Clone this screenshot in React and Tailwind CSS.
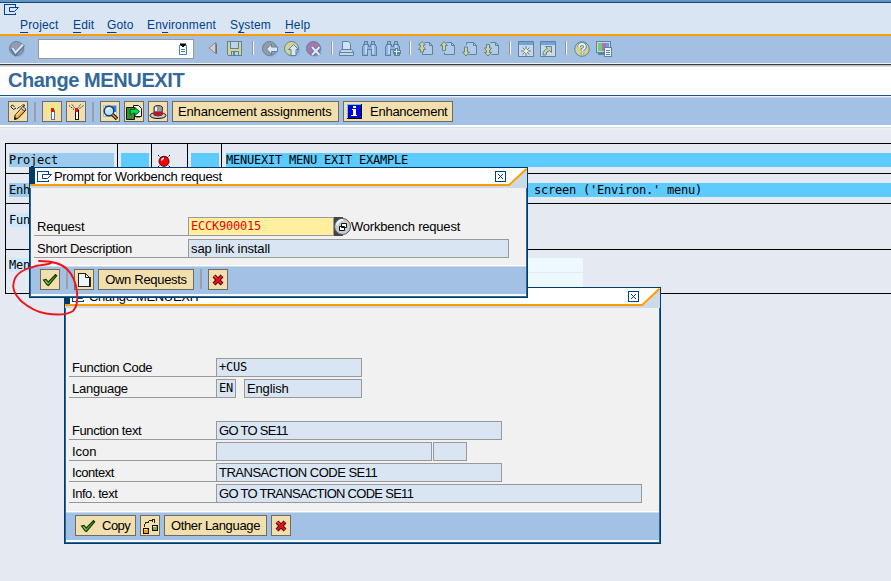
import React from "react";

const SANS = "font-['Liberation_Sans',sans-serif]";
const MONO = "font-['DejaVu_Sans_Mono',monospace] !text-[12px] !tracking-[-0.22px]";

function Svg({ w = 16, h = 16, vb, children, className = "" }) {
  return (
    <svg width={w} height={h} viewBox={vb || `0 0 ${w} ${h}`} fill="none" className={`block shrink-0 ${className}`}>
      {children}
    </svg>
  );
}

const LINE = "#5f8399";
const YEL = "#d5d391";

/* ---------- window and toolbar icons ---------- */

function MenuIcon() {
  return (
    <Svg w={16} h={12}>
      <path d="M11.5 3V.5H.5v10h11V8.5" stroke="#00408c" shapeRendering="crispEdges" />
      <path d="M5.5 3.5h9l-4 4h-5z" stroke="#00408c" />
    </Svg>
  );
}

function Ball({ color, children }) {
  return (
    <Svg>
      <circle cx="9" cy="9" r="7" fill="#91b2e0" />
      <circle cx="7.5" cy="7.5" r="7" fill={color} stroke={LINE} />
      {children}
    </Svg>
  );
}

const Enter = () => (
  <Ball color="#969caa">
    <path d="M3 7.5l3.5 5 8-9" stroke="#587795" strokeWidth="4" />
    <path d="M3.5 7l3 4.5 7.5-8" stroke="#d8e4f4" strokeWidth="2.2" />
  </Ball>
);
const Back = () => (
  <Ball color="#999ba4">
    <path d="M4.5 8L9.5 3V6h6v4.500h-6v3z" fill="#d8e6f8" stroke={LINE} />
  </Ball>
);
const Exit = () => (
  <Ball color={YEL}>
    <path d="M9.500 3.500l5 5h-2.500v6h-5v-6H4.500z" fill="#d8e6f8" stroke={LINE} />
  </Ball>
);
const Cancel = () => (
  <Ball color="#a778ad">
    <path d="M6 6l7.500 8M13.500 6L6 14" stroke="#6a7398" strokeWidth="3.500" />
    <path d="M6 6l7.500 8M13.500 6L6 14" stroke="#e0eafb" strokeWidth="2" />
  </Ball>
);
const Triangle = () => (
  <Svg w={10} h={14}>
    <path d="M9 1v12L6 11z" fill="#716b70" />
    <path d="M7.500 1.500v11L1 7z" fill="#d5d0cf" stroke="#8f8987" />
  </Svg>
);
const Save = () => (
  <Svg>
    <g shapeRendering="crispEdges">
      <path d="M.5 .5h14v14H1.500L.5 13.500z" fill={YEL} stroke={LINE} />
      <path d="M3.500 .5h8v7h-8zM4.500 10.500h7v4h-7z" fill="#bdd2ee" stroke={LINE} />
      <path d="M6 11h2v3H6z" fill={LINE} />
    </g>
  </Svg>
);
const Print = () => (
  <Svg>
    <path d="M3.500 8.500v-8h6l2 2v6" fill="#d0e0f7" stroke={LINE} />
    <path d="M.5 11l2-2.500h10l2 2.500v3.500H.5z" fill="#c6d5eb" stroke={LINE} />
    <path d="M1 11.500h13" stroke={LINE} />
  </Svg>
);
const Glasses = ({ plus }) => (
  <Svg>
    <g shapeRendering="crispEdges">
      <path d="M2.500 .5h3v3h1v2h2v-2h1v-3h3v3h1l1 3v8h-5v-6h-4v6h-5v-8l1-3h1z" fill="#8db0ea" stroke={LINE} />
      <path d="M3 4h2v9H3zM10 4h2v9h-2z" fill="#bcd4f8" />
      <path d="M2 3.500h4M9 3.500h4" stroke={LINE} />
      {plus && (
        <>
          <path d="M10 7h3v2h3v3.500h-3V15h-3v-2.500H7.500V9H10z" fill={LINE} />
          <path d="M11.500 8v6M8.500 10.500h6.500" stroke="#e1eafb" strokeWidth="1.500" />
        </>
      )}
    </g>
  </Svg>
);
const Page = ({ kind }) => (
  <Svg>
    <path
      d={kind === "down" ? "M4.500 4V1.500h7l3 3v9h-8" : kind === "last" ? "M6.500 1.500h5l3 3v9h-7" : "M6.500 1.500h5l3 3v9h-10v-2"}
      fill="#b3cbea"
      stroke={LINE}
    />
    <path d="M11.500 1.500v3h3" stroke={LINE} />
    {kind === "first" && <path d="M4 .5L7.500 4H5.500v1.500L7.500 8.500H5.500v2.500h-3V8.500H.5l2-3V4H.5z" fill={YEL} stroke={LINE} />}
    {kind === "up" && <path d="M4 .5l3.500 4h-2v5h-3v-5h-2z" fill={YEL} stroke={LINE} />}
    {kind === "down" && <path d="M4 15l-3.500-4h2V6h3v5h2z" fill={YEL} stroke={LINE} />}
    {kind === "last" && <path d="M4 15L.5 11.500h2V10L.5 7h2V3.500h3V7h2l-2 3v1.500h2z" fill={YEL} stroke={LINE} />}
  </Svg>
);
const Session = () => (
  <Svg>
    <path d="M.5 .5h15v15H.5z" fill="#c9d8eb" stroke={LINE} />
    <path d="M1 1h14v3H1z" fill="#70a2dc" />
    <path d="M8 5v10M3 10h10M4.500 6.500l7 7M11.500 6.500l-7 7" stroke={LINE} />
    <path d="M8 8v4M6 10h4" stroke="#eeeeb0" strokeWidth="2" />
  </Svg>
);
const Shortcut = () => (
  <Svg>
    <path d="M.5 .5h15v15H.5z" fill="#c9d8eb" stroke={LINE} />
    <path d="M1 1h14v3H1z" fill="#70a2dc" />
    <path d="M5.500 5.500h6v6L9.500 9.500Q6 10 6 14H3Q3 9 7.500 7.500z" fill={YEL} stroke={LINE} />
  </Svg>
);
const Help = () => (
  <Svg>
    <circle cx="8" cy="8" r="7.300" fill={YEL} stroke={LINE} />
    <path d="M5 6q0-3 3-3t3 3q0 1.500-2.500 2.500v1.500M8.500 11.500v2" stroke={LINE} strokeWidth="3.500" />
    <path d="M5 6q0-3 3-3t3 3q0 1.500-2.500 2.500v1.500M8.500 11.500v2" stroke="#eaf0f3" strokeWidth="1.800" />
  </Svg>
);
const Layout = () => (
  <Svg>
    <g shapeRendering="crispEdges">
      <path d="M.5 .5h14v11H.5z" fill="#c6d5e8" stroke={LINE} />
      <path d="M2 2h4v8H2z" fill="#74ce6d" />
      <path d="M6 2h4v8H6z" fill="#b06fc0" />
      <path d="M10 2h3v8h-3z" fill="#739ed9" />
      <path d="M2 12h8v2H2z" fill={LINE} />
      <path d="M8.500 6.500h7v9h-7z" fill="#e8f0fa" stroke={LINE} />
      <path d="M10 9.500h4M10 11.500h4M10 13.500h4" stroke={LINE} />
    </g>
  </Svg>
);

/* ---------- application toolbar icons ---------- */

const Pencil = () => (
  <Svg w={18} h={18}>
    <path d="M1.500 3.500l2-1.500 2 2M2 4l2.500 2.500L7 5M8 5.500l5-3.500h2.500l-1 2" stroke="#111" />
    <path d="M8 4.500l5-3 .5 1" stroke="#fff" />
    <path d="M5.500 16.500l.5-4 7-8 3.500 3-7.500 8z" fill="#f7a43a" stroke="#111" />
    <path d="M7.500 12.500l6-7" stroke="#ffe59b" strokeWidth="1.500" />
    <path d="M12 5.500l1.500-2L17 6l-1.500 2z" fill="#c9d4e0" stroke="#111" strokeWidth=".7" />
    <path d="M5.500 16.500l.3-2.500 2.200 1.800z" fill="#111" />
  </Svg>
);
const Wand = ({ off }) => (
  <Svg w={18} h={18}>
    {off ? (
      <path d="M2 2.500l5 4M5 1.500l3 4M13.500 1.500l-3 4M16.500 2.500l-5 4" stroke="#333" strokeDasharray="1.500 1" />
    ) : (
      <path d="M4 2.500l3 3M15 2.500l-3 3M9.500 .5v4M2.500 8h4M12.500 8h4M4 13l3-3M15 13l-3-3" stroke="#ffff00" />
    )}
    <g shapeRendering="crispEdges">
      {!off && <path d="M7 4h5v7H7z" fill="#ffff60" opacity=".6" />}
      <path d="M8 7h4v10H8z" fill={off ? "#111" : "#5a6ac0"} />
      <path d="M8 5h3v4H8z" fill="#dc1420" />
      <path d="M9 9h2v7H9z" fill="#fff" />
    </g>
  </Svg>
);
const Lens = () => (
  <Svg w={18} h={18}>
    <g shapeRendering="crispEdges">
      <path d="M2 2h13v11H2z" fill="#eef4f8" stroke="#a9bccb" />
      <path d="M4 3h11v6H4z" fill="#2b7fdc" />
    </g>
    <circle cx="8" cy="8" r="4.800" fill="#b9e5fa" stroke="#223a66" strokeWidth="1.500" />
    <path d="M5.500 7q1-2 3.500-2" stroke="#fff" strokeWidth="1.500" />
    <path d="M11.500 11.500l4.500 4.500" stroke="#111" strokeWidth="3.500" />
    <path d="M11.500 11.500l4 4" stroke="#f79a32" strokeWidth="1.500" />
  </Svg>
);
const Transfer = () => (
  <Svg w={18} h={18}>
    <path d="M8.500 2.500h5l3 3v8h-8z" fill="#fff" stroke="#111" />
    <path d="M1.500 4.500h8v12h-8z" fill="#3a8d2c" stroke="#111" />
    <path d="M5 6.500h5v-2l4.500 4-4.500 4v-2.500q-3 0-4.500 2z" fill="#00e03a" stroke="#006020" />
    <path d="M11 14.500h4" stroke="#888" />
  </Svg>
);
const Hat = () => (
  <Svg w={18} h={18}>
    <ellipse cx="9" cy="12.500" rx="8" ry="3" fill="#c5c9d2" stroke="#111" />
    <path d="M5 12V4q1-1.500 4-1.500t4.500 1.500L13 12q-4 2-8 0z" fill="#969aa5" stroke="#333" />
    <path d="M5 8.500h8.500V12q-4 2-8.500 0z" fill="#b91824" />
    <path d="M7 4v4" stroke="#edf0f5" strokeWidth="2" />
  </Svg>
);
const Info = () => (
  <Svg w={15} h={15}>
    <g shapeRendering="crispEdges">
      <path d="M0 0h15v15H0z" fill="#000" />
      <path d="M0 0h14v14H0z" fill="#5fc8f0" />
      <path d="M1 1h13v13H1z" fill="#0000d8" />
      <path d="M6 2h3v2H6zM5 5h4v6h1v1H4v-1h2V6H5z" fill="#fff" />
    </g>
  </Svg>
);
const Check = () => (
  <Svg w={16} h={16}>
    <path d="M1.500 8l2.500-.7 2.300 2.700L13.500 2.500l1.200 1.200L6.500 13.500 5.300 13z" fill="#4eac21" stroke="#16330b" strokeWidth="1.100" />
    <path d="M3.500 9l2.300 2.500" stroke="#a4da60" />
  </Svg>
);
const Cross = () => (
  <Svg w={12} h={12}>
    <path d="M2 2l8 8M10 2l-8 8" stroke="#420608" strokeWidth="4" />
    <path d="M2 2l8 8M10 2l-8 8" stroke="#e3131e" strokeWidth="2.400" />
    <path d="M2 1.500l2.500 2.500" stroke="#ff8080" strokeWidth=".8" />
  </Svg>
);
const NewPage = () => (
  <Svg w={14} h={16}>
    <g shapeRendering="crispEdges">
      <path d="M1.500 1.500h8v3h3v10h-11z" fill="#ecf8ff" />
      <path d="M9 1.500H1.500v13" stroke="#222" />
      <path d="M1 14.500h12V5" stroke="#222" strokeWidth="1.500" />
    </g>
    <path d="M8.500 1.500v4h4z" fill="#fff" stroke="#222" />
  </Svg>
);
const Link = () => (
  <Svg w={16} h={16}>
    <g shapeRendering="crispEdges">
      <path d="M2.500 9V6.500h1v-2h3M5 4.500h1v-2h3v-1h4M10.500 .5v3M12.500 2v4" stroke="#222" strokeDasharray="3 1" />
      <path d="M1.500 10.500h5v5h-5z" fill="#ff9a10" stroke="#111" />
      <path d="M10.500 7.500h5v5h-5z" fill="#78b13c" stroke="#111" />
      <path d="M2 11.500h3M11 8.500h3" stroke="#ffe4a0" />
    </g>
  </Svg>
);
const Led = () => (
  <Svg w={14} h={14}>
    <path d="M1 1l12 12M13 1L1 13" stroke="#111" strokeDasharray="2 1" />
    <circle cx="7" cy="7.300" r="5" fill="#f00505" stroke="#5e0000" />
    <path d="M4.500 6.500q.5-2 2.500-2.200" stroke="#fff" strokeWidth="1.500" />
  </Svg>
);

/* ---------- shared controls ---------- */

const Sep = () => (
  <div className="flex h-[14px] w-[2px] shrink-0">
    <div className="w-px bg-[#8e99a8]" />
    <div className="w-px bg-[#f8f3e9]" />
  </div>
);
const Bar = ({ className = "" }) => <div className={`h-[20px] w-[2px] shrink-0 bg-[#9a9fa8] ${className}`} />;

function Btn({ className = "w-[20px] justify-center", children }) {
  return (
    <button className={`flex h-[21px] shrink-0 items-center whitespace-nowrap border border-[#6e6c62] bg-[#f2dfae] text-[13px] leading-none text-black ${className}`}>
      {children}
    </button>
  );
}

function Field({ className = "", children }) {
  return (
    <div className={`flex h-[19px] shrink-0 items-center overflow-hidden whitespace-pre border border-[#999] bg-[#d9e5f3] pl-[2px] text-[13px] leading-[17px] text-black ${className}`}>
      {children}
    </div>
  );
}

function Label({ className, children }) {
  return (
    <div className={`flex h-[19px] shrink-0 items-center whitespace-nowrap border-b border-[#999] pl-[3px] pt-px text-[13px] leading-[17px] ${className}`}>
      {children}
    </div>
  );
}

function Dialog({ className, title, children, footer, inner }) {
  return (
    <section className={`absolute flex flex-col border border-[#003c6b] bg-[#f1f1f1] ${className}`}>
      <div className="flex h-[16px] shrink-0 bg-white">
        <div className="w-[5px] bg-[#003c6b]" />
        <div className="flex flex-1 items-center overflow-hidden whitespace-nowrap pl-[2px] pt-px text-[13px]">
          <MenuIcon />
          <span className="pl-[1px] leading-4 tracking-[-0.32px]">{title}</span>
        </div>
        <Svg w={33} h={18} className="relative z-10">
          <path d="M33 1v17H16z" fill="#cbdae8" />
          <path d="M1.500 3.500h10v10h-10z" stroke="#00407f" shapeRendering="crispEdges" />
          <path d="M4 6l5 5M9 6l-5 5" stroke="#00407f" />
          <path d="M15 17.300L32.500 .8" stroke="#ff9c00" strokeWidth="2" />
        </Svg>
      </div>
      <div className="flex h-[4px] shrink-0 flex-col">
        <div className="mr-[17px] h-[2px] bg-[#ff9c00]" />
        <div className="h-[2px] bg-[#cbdae8]" />
      </div>
      <div className="flex flex-1 flex-col border-x border-[#2d6898]">
        <div className={`flex-1 ${inner}`}>{children}</div>
        <div className="h-px bg-white" />
        <div className="h-px bg-[#cbdbed]" />
        <div className="flex h-[27px] items-start bg-[#a3c0e5] pt-[2px]">{footer}</div>
        <div className="h-[2px] bg-[#f5f8fc]" />
      </div>
      <div className="h-px bg-[#2d6898]" />
    </section>
  );
}

const MENU = [
  ["Project", "w-[53px]"],
  ["Edit", "w-[34px]"],
  ["Goto", "w-[40px]"],
  ["En|v|ironment", "w-[83px]"],
  ["S|y|stem", "w-[55px]"],
  ["Help", "w-[40px]"],
];

function MenuItem({ label, width }) {
  const parts = label.includes("|") ? label.split("|") : ["", label[0], label.slice(1)];
  return (
    <span className={`${width} whitespace-nowrap`}>
      {parts[0]}
      <span className="underline decoration-1 underline-offset-[3px] [text-decoration-skip-ink:none]">{parts[1]}</span>
      {parts[2]}
    </span>
  );
}

function Cell({ className, children }) {
  return <div className={`h-[14px] whitespace-pre leading-[14px] ${className}`}>{children}</div>;
}

export default function App() {
  return (
    <div className={`relative h-[581px] w-[891px] overflow-hidden bg-[#e5e9f1] text-black ${SANS}`}>
      <header>
        <div className="h-[3px] border-b border-[#1e4268] bg-[#5c95c8]" />
        <div className="h-[31px] bg-[#d9e5f3]">
          <div className="h-[15px] pl-1 pt-px"><MenuIcon /></div>
          <nav className="flex pl-[20px] text-[12px] leading-[15px] tracking-[0.15px] text-[#003f8a]">
            {MENU.map(([l, w]) => <MenuItem key={l} label={l} width={w} />)}
          </nav>
        </div>
        <div className="h-[2px] bg-[#ff9c00]" />
        <div className="flex h-[27px] items-start bg-[#a3c0e3] pl-[9px] pt-[5px]">
          <Enter />
          <div className="-mt-[2px] ml-[13px] mr-[14px] flex h-[20px] w-[156px] items-center justify-end border border-[#999] bg-white pr-[5px]">
            <Svg w={10} h={13}>
              <path d="M1.500 2.500h7v9h-7z" fill="#fff" stroke="#4d7fa0" />
              <path d="M3 6.500h4M3 8.500h4" stroke="#4d7fa0" />
              <path d="M2 1h6L5 4z" fill="#000" stroke="#000" />
            </Svg>
          </div>
          <Triangle />
          <div className="ml-[9px] mr-[9px]"><Save /></div>
          <Sep />
          <div className="ml-2 mr-[9px] flex gap-[6px]"><Back /><Exit /><Cancel /></div>
          <Sep />
          <div className="ml-[6px] mr-[8px] flex gap-[7px]"><Print /><Glasses /><Glasses plus /></div>
          <Sep />
          <div className="ml-[7px] mr-[9px] flex gap-[6px]">
            <Page kind="first" /><Page kind="up" /><Page kind="down" /><Page kind="last" />
          </div>
          <Sep />
          <div className="ml-[7px] mr-[9px] flex gap-[6px]"><Session /><Shortcut /></div>
          <Sep />
          <div className="ml-[7px] flex gap-[6px]"><Help /><Layout /></div>
        </div>
        <div className="h-px bg-[#eef4fb]" />
        <div className="h-px bg-[#3b3b3f]" />
        <div className="h-px bg-[#bcbcc0]" />
        <div className="h-px bg-[#dedede]" />
        <div className="h-[28px] bg-white pl-2 text-[20px] font-bold leading-[27px] tracking-[-0.4px] text-[#336899]">Change MENUEXIT</div>
        <div className="h-px bg-[#23507f]" />
        <div className="h-px bg-[#eaf1f9]" />
        <div className="h-px bg-[#bed3eb]" />
        <div className="flex h-[27px] items-center bg-[#a3c0e5] pl-2">
          <Btn><Pencil /></Btn>
          <Bar className="mx-[6px]" />
          <div className="flex gap-1"><Btn><Wand /></Btn><Btn><Wand off /></Btn></div>
          <Bar className="mx-[6px]" />
          <div className="flex gap-1">
            <Btn><Lens /></Btn>
            <Btn><Transfer /></Btn>
            <Btn><Hat /></Btn>
            <Btn className="w-[167px] pl-[5px] tracking-[-0.14px]">Enhancement assignments</Btn>
            <Btn className="w-[110px] pl-[3px] tracking-[-0.25px]"><Info /><span className="pl-2">Enhancement</span></Btn>
          </div>
        </div>
        <div className="h-[2px] bg-white" />
        <div className="h-px bg-[#d0dfee]" />
        <div className="h-[2px] bg-[#f0f0f0]" />
      </header>

      <main className={`ml-[5px] mt-[13px] border-l border-t border-black ${MONO}`}>
        <div className="flex h-[30px] border-b border-black">
          <div className="w-[112px] border-r border-black pl-[3px] pr-[3px] pt-[9px]"><Cell className="bg-[#9bcbed]">Project</Cell></div>
          <div className="w-[34px] border-r border-black pl-[3px] pr-[2px] pt-[9px]"><Cell className="bg-[#5ecbff]" /></div>
          <div className="w-[36px] border-r border-black pl-[5px] pt-[10px]"><Led /></div>
          <div className="w-[34px] border-r border-black pl-[3px] pr-[2px] pt-[9px]"><Cell className="bg-[#5ecbff]" /></div>
          <div className="flex-1 pl-[4px] pt-[9px]"><Cell className="bg-[#5ecbff]">MENUEXIT MENU EXIT EXAMPLE</Cell></div>
        </div>
        <div className="flex h-[30px] border-b border-black pt-[9px]">
          <Cell className="ml-[3px] w-[105px] bg-[#9bcbed]">Enh</Cell>
          <Cell className="ml-[112px] flex-1 bg-[#5ecbff] pl-[308px]">screen ('Environ.' menu)</Cell>
        </div>
        <div className="h-[46px] border-b border-black pl-[3px] pt-[9px]"><Cell className="w-[105px] bg-[#cde8fd]">Fun</Cell></div>
        <div className="flex h-[44px] border-b border-black pl-[3px] pt-[8px]">
          <Cell className="w-[105px] bg-[#cde8fd]">Men</Cell>
          <div className="ml-[112px] flex w-[357px] flex-col gap-px">
            <Cell className="bg-[#edf8ff]" />
            <Cell className="bg-[#edf8ff]" />
          </div>
        </div>
      </main>

      <Dialog
        className="left-[64px] top-[287px] h-[257px] w-[597px]"
        title="Change MENUEXIT"
        inner="pl-[3px] pt-[50px]"
        footer={
          <div className="flex gap-1 pl-[9px]">
            <Btn className="w-[61px] pl-[4px]"><Check /><span className="pl-[6px] tracking-[-0.5px]">Copy</span></Btn>
            <Btn><Link /></Btn>
            <Btn className="w-[103px] justify-center tracking-[-0.35px]">Other Language</Btn>
            <Btn><Cross /></Btn>
          </div>
        }
      >
        <div className="flex flex-col gap-[2px]">
          <div className="flex"><Label className="w-[147px] tracking-[-0.33px]">Function Code</Label><Field className={`w-[146px] ${MONO}`}>+CUS</Field></div>
          <div className="flex"><Label className="w-[147px] tracking-[-0.25px]">Language</Label><Field className={`mr-2 w-[20px] ${MONO}`}>EN</Field><Field className="w-[118px] tracking-[-0.15px]">English</Field></div>
          <div className="mt-[21px] flex"><Label className="w-[147px] tracking-[-0.4px]">Function text</Label><Field className="w-[286px] tracking-[-0.72px]">GO TO SE11</Field></div>
          <div className="flex"><Label className="w-[147px]">Icon</Label><Field className="mr-px w-[216px]" /><Field className="w-[34px]" /></div>
          <div className="flex"><Label className="w-[147px] tracking-[-0.45px]">Icontext</Label><Field className="w-[286px] tracking-[-0.5px]">TRANSACTION CODE SE11</Field></div>
          <div className="flex"><Label className="w-[147px] tracking-[-0.45px]">Info. text</Label><Field className="w-[426px] tracking-[-0.72px]">GO TO TRANSACTION CODE SE11</Field></div>
        </div>
      </Dialog>

      <Dialog
        className="left-[29px] top-[167px] h-[131px] w-[499px]"
        title="Prompt for Workbench request"
        inner="pl-[3px] pt-[29px]"
        footer={
          <div className="flex pl-[9px]">
            <Btn><Check /></Btn>
            <Bar className="mx-[6px]" />
            <Btn><NewPage /></Btn>
            <Btn className="ml-1 w-[96px] justify-center tracking-[-0.3px]">Own Requests</Btn>
            <Bar className="mx-[6px]" />
            <Btn><Cross /></Btn>
          </div>
        }
      >
        <div className="flex flex-col gap-[2px]">
          <div className="flex">
            <Label className="w-[154px] tracking-[-0.15px]">Request</Label>
            <Field className={`w-[146px] !bg-[#ffef9f] !text-[#f00000] ${MONO}`}>ECCK900015</Field>
            <Svg w={17} h={19}>
              <path d="M0 0h9v19H0z" fill="#444" />
              <circle cx="8.500" cy="9.500" r="8" fill="#c5cbd2" stroke="#555" />
              <path d="M3 8q1-5 6-5" stroke="#e8f5ff" strokeWidth="2" />
              <path d="M7.500 6.500h5v4h-5zM5.500 9.500h5v4h-5z" fill="#fff" stroke="#111" />
            </Svg>
            <span className="text-[13px] leading-[20px] tracking-[-0.2px]">Workbench request</span>
          </div>
          <div className="flex"><Label className="w-[154px] tracking-[-0.28px]">Short Description</Label><Field className="w-[321px] tracking-[-0.12px]">sap link install</Field></div>
        </div>
      </Dialog>

      <svg className="pointer-events-none absolute left-[8px] top-[254px] z-20" width="76" height="66" viewBox="8 254 76 66" fill="none">
        <path d="M39 261C53 261 61 263 67 269C72 274 76 283 77 292C78 301 77 307 73 311C67 315 56 315 46 313.500C35 312 27 306 21 301C14 294 12 287 14 281C16 274 24 269 33 267C39 264 48 266 52.500 262" stroke="#ed151b" strokeWidth="1.900" strokeLinecap="round" />
      </svg>
    </div>
  );
}
